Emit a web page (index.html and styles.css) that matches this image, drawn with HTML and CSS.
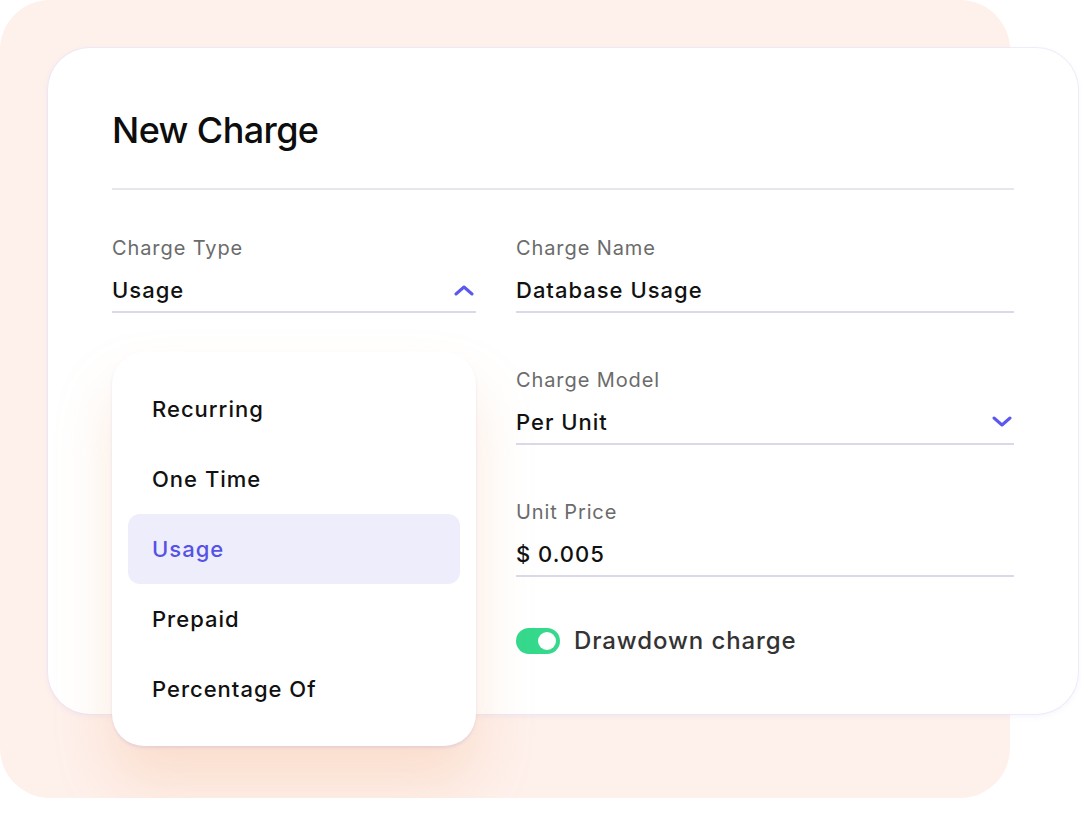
FILE: index.html
```html
<!DOCTYPE html>
<html lang="en">
<head>
  <meta charset="UTF-8">
  <title>New Charge</title>
  <link rel="stylesheet" href="styles.css">
</head>
<body>

<div class="backdrop">
  <div class="card">
    <h1 class="title">New Charge</h1>

    <div class="form">
      <div class="col">
        <div class="field">
          <div class="label">Charge Type</div>
          <div class="value">
            <span>Usage</span>
            <svg class="chevron" width="20" height="12" viewBox="0 0 20 12"><path d="M2 10 L10 3 L18 10" fill="none" stroke="#5b57f0" stroke-width="3" stroke-linecap="round" stroke-linejoin="round"/></svg>
          </div>

          <ul class="menu">
            <li>Recurring</li>
            <li>One Time</li>
            <li class="active">Usage</li>
            <li>Prepaid</li>
            <li>Percentage Of</li>
          </ul>
        </div>
      </div>

      <div class="col">
        <div class="field">
          <div class="label">Charge Name</div>
          <div class="value"><span>Database Usage</span></div>
        </div>
        <div class="field">
          <div class="label">Charge Model</div>
          <div class="value">
            <span>Per Unit</span>
            <svg class="chevron" width="20" height="12" viewBox="0 0 20 12"><path d="M2 2 L10 9 L18 2" fill="none" stroke="#5b57f0" stroke-width="3" stroke-linecap="round" stroke-linejoin="round"/></svg>
          </div>
        </div>
        <div class="field">
          <div class="label">Unit Price</div>
          <div class="value"><span>$ 0.005</span></div>
        </div>

        <div class="switch-row">
          <span class="switch"><span class="knob"></span></span>
          <span class="switch-label">Drawdown charge</span>
        </div>
      </div>
    </div>
  </div>
</div>

</body>
</html>
```

FILE: styles.css
```css
body {
  margin: 0;
  background: #fff;
  font-family: 'Inter', 'Noto Sans', sans-serif;
  color: #111;
}

.backdrop {
  width: 1010px;
  height: 798px;
  background: #fef0eb;
  border-radius: 50px;
  padding: 48px 0 0 48px;
  box-sizing: border-box;
}

.card {
  width: 1030px;
  height: 666px;
  background: #fff;
  border-radius: 42px;
  padding: 60px 64px 0 64px;
  box-sizing: border-box;
  box-shadow: 0 0 0 1px rgba(232, 230, 250, 0.7), 0 2px 6px rgba(120, 110, 220, 0.08);
}

.title {
  margin: 0;
  font-size: 36px;
  line-height: 44px;
  font-weight: 500;
  letter-spacing: -0.6px;
  color: #0d0d0d;
  padding-bottom: 36px;
  border-bottom: 2px solid #e6e6ee;
}

.form {
  display: grid;
  grid-template-columns: 364px 1fr;
  column-gap: 40px;
  padding-top: 46px;
}

.field {
  position: relative;
  margin-bottom: 55px;
}

.label {
  font-size: 20px;
  line-height: 24px;
  letter-spacing: 0.9px;
  color: #6b6b6b;
}

.value {
  display: flex;
  justify-content: space-between;
  align-items: center;
  margin-top: 16px;
  padding-bottom: 7px;
  border-bottom: 2px solid #dad8e9;
  font-size: 22px;
  line-height: 28px;
  font-weight: 500;
  letter-spacing: 1px;
}

.chevron {
  margin-right: 2px;
}

/* open dropdown */
.menu {
  position: absolute;
  top: 116px;
  left: 0;
  width: 364px;
  margin: 0;
  padding: 22px 16px;
  box-sizing: border-box;
  list-style: none;
  background: #fff;
  border-radius: 32px;
  box-shadow: 0 2px 3px rgba(150, 130, 210, 0.18), 0 36px 56px rgba(240, 170, 120, 0.26);
}

.menu li {
  height: 70px;
  line-height: 70px;
  padding-left: 24px;
  font-size: 22px;
  font-weight: 500;
  letter-spacing: 1px;
  color: #111;
  border-radius: 12px;
}

.menu li.active {
  background: #eeedfc;
  color: #5552e6;
}

.switch-row {
  display: flex;
  align-items: center;
  gap: 14px;
  margin-top: -5px;
}

.switch {
  width: 44px;
  height: 26px;
  border-radius: 13px;
  background: #34d98c;
  display: flex;
  align-items: center;
  justify-content: flex-end;
  padding: 0 4px;
  box-sizing: border-box;
}

.knob {
  width: 18px;
  height: 18px;
  border-radius: 50%;
  background: #fff;
}

.switch-label {
  font-size: 24px;
  line-height: 28px;
  font-weight: 500;
  letter-spacing: 0.9px;
  color: #333;
}
```
